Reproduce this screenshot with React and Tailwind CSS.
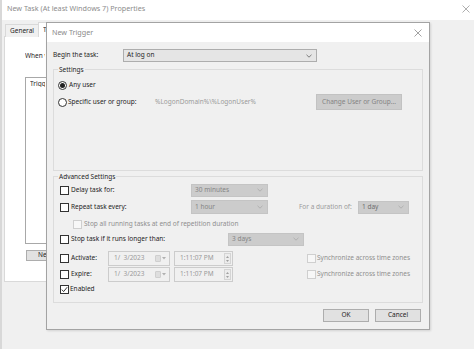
import React from "react";

function Chevron({ color = "#606060" }) {
  return (
    <svg width="6" height="4" viewBox="0 0 6 4" className="shrink-0">
      <polyline points="0.5,0.8 3,3.2 5.5,0.8" fill="none" stroke={color} strokeWidth="0.8" />
    </svg>
  );
}

function CloseX({ color = "#8a8a8a" }) {
  return (
    <svg width="8" height="8" viewBox="0 0 8 8">
      <line x1="0.5" y1="0.5" x2="7.5" y2="7.5" stroke={color} strokeWidth="0.8" />
      <line x1="7.5" y1="0.5" x2="0.5" y2="7.5" stroke={color} strokeWidth="0.8" />
    </svg>
  );
}

function Check({ checked = false, disabled = false }) {
  return (
    <span
      className={
        disabled
          ? "w-[9px] h-[9px] shrink-0 border border-[#cfcfcf] bg-[#f7f7f7] flex items-center justify-center"
          : "w-[9px] h-[9px] shrink-0 border border-[#333333] bg-white flex items-center justify-center"
      }
    >
      {checked && (
        <svg width="7" height="7" viewBox="0 0 7 7">
          <polyline points="0.8,3.6 2.6,5.6 6.2,1.2" fill="none" stroke="#222" strokeWidth="0.9" />
        </svg>
      )}
    </span>
  );
}

function Radio({ on = false }) {
  return (
    <span className="w-[9px] h-[9px] shrink-0 rounded-full border border-[#333333] bg-white flex items-center justify-center">
      {on && <span className="w-[5px] h-[5px] rounded-full bg-[#222]" />}
    </span>
  );
}

function DisSelect({ w, h, text, textColor = "text-[#858585]" }) {
  return (
    <div
      className={`flex items-center justify-between bg-[#cccccc] border border-[#c4c4c4] pl-[3px] pr-[4px] ${w} ${h} ${textColor}`}
    >
      <span>{text}</span>
      <Chevron color="#a8a8a8" />
    </div>
  );
}

function DateBox() {
  return (
    <div className="w-[62px] h-[15px] border border-[#cccccc] bg-[#f0f0f0] flex items-center pl-[5px] pr-[3px] text-[#9a9a9a]">
      <span className="whitespace-pre">1/  3/2023</span>
      <span className="ml-auto flex items-center gap-[1px]">
        <span className="w-[6px] h-[7px] bg-[#dedede] border border-[#cfcfcf] rounded-[1px]" />
        <svg width="4" height="3" viewBox="0 0 4 3">
          <polygon points="0,0 4,0 2,2.5" fill="#b0b0b0" />
        </svg>
      </span>
    </div>
  );
}

function TimeBox() {
  return (
    <div className="w-[59px] h-[15px] border border-[#cccccc] bg-[#f0f0f0] flex items-center pl-[5px] pr-[1px] text-[#9a9a9a]">
      <span>1:11:07 PM</span>
      <span className="ml-auto w-[7px] h-[11px] border border-[#d4d4d4] bg-[#ececec] flex flex-col items-center justify-center gap-[2px]">
        <svg width="3" height="2" viewBox="0 0 3 2">
          <polygon points="0,2 3,2 1.5,0" fill="#a0a0a0" />
        </svg>
        <svg width="3" height="2" viewBox="0 0 3 2">
          <polygon points="0,0 3,0 1.5,2" fill="#a0a0a0" />
        </svg>
      </span>
    </div>
  );
}

function Group({ label, className, children }) {
  return (
    <div className={`relative border border-[#dcdcdc] ${className}`}>
      <span className="absolute -top-[5px] left-[4px] bg-[#f0f0f0] px-[1px] leading-[9px] text-[#1e1e1e]">
        {label}
      </span>
      {children}
    </div>
  );
}

export default function App() {
  return (
    <div className="relative w-[474px] h-[353px] bg-white overflow-hidden font-['Noto_Sans',sans-serif] text-[6.5px] leading-none text-[#1e1e1e]">
      {/* Background window */}
      <div className="h-[349px] flex flex-col border-l-2 border-[#d8d8d8]">
        <div className="h-[20px] shrink-0 bg-white flex items-center justify-between pl-[5px] pr-[4px] pb-[3px]">
          <span className="text-[#8c8c8c] text-[7.2px]">New Task (At least Windows 7) Properties</span>
          <CloseX color="#9a9a9a" />
        </div>
        <div className="flex-1 bg-[#f0f0f0] pl-[2px] pt-[2px]">
          <div className="flex items-end h-[15px] pl-[1px]">
            <div className="h-[13px] flex items-center px-[4px] border border-b-0 border-[#d9d9d9] bg-[#f0f0f0]">
              General
            </div>
            <div className="h-[15px] w-[40px] flex items-center pl-[4px] border border-b-0 border-[#d9d9d9] bg-white -ml-px">
              <span className="w-[5px] overflow-hidden whitespace-nowrap">Triggers</span>
            </div>
          </div>
          <div className="w-[426px] h-[246px] -mt-px bg-white border border-[#d9d9d9] pl-[20px] pt-[15px]">
            <div className="h-[8px] flex items-center">
              <span className="w-[20px] overflow-hidden whitespace-nowrap">When you create a task</span>
            </div>
            <div className="mt-[17px] w-[380px] h-[167px] border border-[#a8a8a8] bg-white pl-[4px] pt-[2px]">
              <div className="h-[8px] flex items-center">
                <span className="w-[15px] overflow-hidden whitespace-nowrap">Trigger</span>
              </div>
            </div>
            <div className="mt-[6px] ml-[1px] w-[44px] h-[11px] bg-[#e1e1e1] border border-[#adadad] flex items-center pl-[11px]">
              <span className="w-[8px] overflow-hidden whitespace-nowrap">New...</span>
            </div>
          </div>
        </div>
      </div>

      {/* New Trigger dialog */}
      <div className="absolute z-20 left-[46px] top-[22px] w-[384px] h-[308px] border border-[#a3a3a3] bg-[#f0f0f0] flex flex-col shadow-[1px_1px_2px_rgba(0,0,0,0.12)]">
        <div className="h-[19px] shrink-0 bg-white flex items-center justify-between pl-[5px] pr-[7px]">
          <span className="text-[#8a8a8a] text-[7.2px]">New Trigger</span>
          <CloseX color="#8a8a8a" />
        </div>
        <div className="flex-1 px-[6px] pt-[7px] flex flex-col">
          <div className="h-[13px] flex items-center">
            <span className="w-[70px]">Begin the task:</span>
            <div className="w-[194px] h-[13px] bg-[#e5e5e5] border border-[#adadad] flex items-center justify-between pl-[3px] pr-[4px]">
              <span>At log on</span>
              <Chevron />
            </div>
          </div>

          <Group label="Settings" className="mt-[7px] w-[370px] h-[102px] pl-[4px]">
            <div className="mt-[10px] h-[10px] flex items-center gap-[2px]">
              <Radio on />
              <span>Any user</span>
            </div>
            <div className="mt-[4px] h-[16px] flex items-center">
              <div className="w-[97px] flex items-center gap-[1px]">
                <Radio />
                <span>Specific user or group:</span>
              </div>
              <span className="w-[161px] text-[#9b9b9b]">%LogonDomain%\%LogonUser%</span>
              <div className="w-[86px] h-[16px] bg-[#cccccc] border border-[#c2c2c2] text-[#848484] flex items-center justify-center">
                Change User or Group...
              </div>
            </div>
          </Group>

          <Group label="Advanced Settings" className="mt-[5px] w-[370px] h-[127px] pl-[6px]">
            <div className="mt-[6px] h-[14px] flex items-center">
              <div className="w-[131px] flex items-center gap-[2px]">
                <Check />
                <span>Delay task for:</span>
              </div>
              <DisSelect w="w-[77px]" h="h-[13px]" text="30 minutes" />
            </div>
            <div className="mt-[2px] h-[16px] flex items-center">
              <div className="w-[131px] flex items-center gap-[2px]">
                <Check />
                <span>Repeat task every:</span>
              </div>
              <DisSelect w="w-[77px]" h="h-[14px]" text="1 hour" />
              <span className="ml-[31px] w-[59px] text-[#9b9b9b]">For a duration of:</span>
              <DisSelect w="w-[51px]" h="h-[13px]" text="1 day" textColor="text-[#6f6f6f]" />
            </div>
            <div className="mt-[4px] h-[10px] flex items-center gap-[2px] ml-[13px]">
              <Check disabled />
              <span className="text-[#8f8f8f]">Stop all running tasks at end of repetition duration</span>
            </div>
            <div className="mt-[3px] h-[14px] flex items-center">
              <div className="w-[168px] flex items-center gap-[2px]">
                <Check />
                <span>Stop task if it runs longer than:</span>
              </div>
              <DisSelect w="w-[76px]" h="h-[13px]" text="3 days" />
            </div>
            <div className="mt-[5px] h-[15px] flex items-center">
              <div className="w-[48px] flex items-center gap-[2px]">
                <Check />
                <span>Activate:</span>
              </div>
              <DateBox />
              <div className="ml-[4px]">
                <TimeBox />
              </div>
              <div className="ml-[74px] flex items-center gap-[1px]">
                <Check disabled />
                <span className="text-[#8f8f8f]">Synchronize across time zones</span>
              </div>
            </div>
            <div className="mt-[1px] h-[15px] flex items-center">
              <div className="w-[48px] flex items-center gap-[2px]">
                <Check />
                <span>Expire:</span>
              </div>
              <DateBox />
              <div className="ml-[4px]">
                <TimeBox />
              </div>
              <div className="ml-[74px] flex items-center gap-[1px]">
                <Check disabled />
                <span className="text-[#8f8f8f]">Synchronize across time zones</span>
              </div>
            </div>
            <div className="mt-[2px] h-[10px] flex items-center gap-[1px]">
              <Check checked />
              <span>Enabled</span>
            </div>
          </Group>

          <div className="mt-[6px] flex justify-end gap-[6px] pr-[2px]">
            <div className="w-[46px] h-[13px] bg-[#e1e1e1] border border-[#adadad] flex items-center justify-center">OK</div>
            <div className="w-[46px] h-[13px] bg-[#e1e1e1] border border-[#adadad] flex items-center justify-center">Cancel</div>
          </div>
        </div>
      </div>
    </div>
  );
}
